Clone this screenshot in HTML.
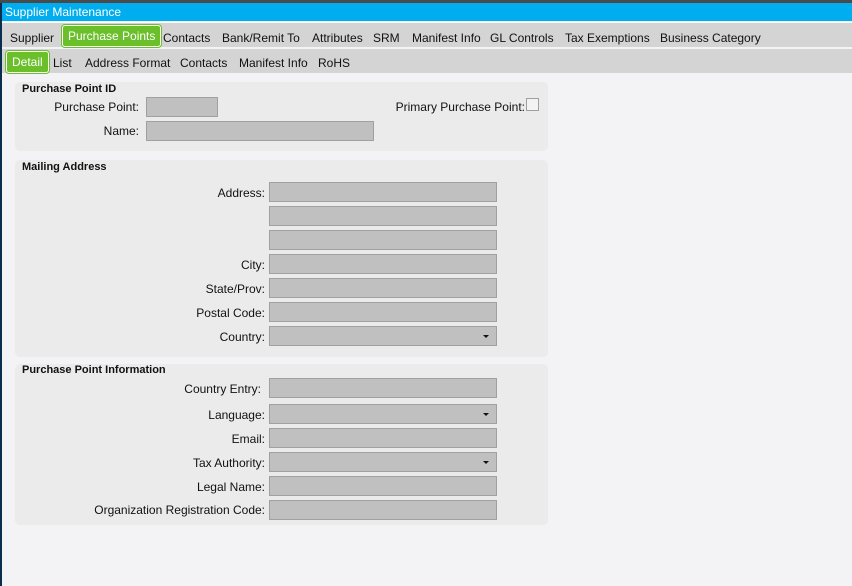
<!DOCTYPE html>
<html><head><style>
*{margin:0;padding:0;box-sizing:border-box}
body{width:852px;height:586px;background:#f3f3f5;font-family:"Liberation Sans",Arial,sans-serif;font-size:12px;color:#111;position:relative;overflow:hidden}
.a{position:absolute}
.top{left:0;top:0;width:852px;height:3px;background:#4a4a4a}
.title{left:0;top:3px;width:852px;height:18px;background:#00adef;color:#fff;padding:2px 0 0 5px;font-size:12px}
.lb{left:0;top:3px;width:2px;height:583px;background:#0b2e4e}
.tabs{left:2px;top:22px;width:850px;height:25px;background:#d4d4d4;border-top:1px solid #fff}
.sub{left:2px;top:49px;width:850px;height:24px;background:#d4d4d4}
.t{position:absolute;top:8px;white-space:nowrap}
.act{position:absolute;background:#6abf2a;color:#fff;border:1px solid #fff;border-radius:3px;box-shadow:0 0 0 1px #6abf2a;padding:3px 5px}
.p{position:absolute;left:15px;width:533px;background:#ebebeb;border-radius:5px}
.h{position:absolute;left:7px;font-weight:bold;font-size:11px}
.l{position:absolute;text-align:right;white-space:nowrap}
.i{position:absolute;height:20px;background:#c0c0c0;border:1px solid #a0a0a0}
.dd::after{content:"";position:absolute;right:7px;top:8px;border-left:3px solid transparent;border-right:3px solid transparent;border-top:3px solid #111}
</style></head><body>
<div class="a top"></div>
<div class="a title">Supplier Maintenance</div>
<div class="a lb"></div>
<div class="a tabs">
<span class="t" style="left:8px">Supplier</span>
<span class="act" style="left:60px;top:2px;height:22px">Purchase Points</span>
<span class="t" style="left:161px">Contacts</span>
<span class="t" style="left:220px">Bank/Remit To</span>
<span class="t" style="left:310px">Attributes</span>
<span class="t" style="left:371px">SRM</span>
<span class="t" style="left:410px">Manifest Info</span>
<span class="t" style="left:488px">GL Controls</span>
<span class="t" style="left:563px">Tax Exemptions</span>
<span class="t" style="left:658px">Business Category</span>
</div>
<div class="a sub">
<span class="act" style="left:4px;top:2px;height:22px">Detail</span>
<span class="t" style="left:51px;top:7px">List</span>
<span class="t" style="left:83px;top:7px">Address Format</span>
<span class="t" style="left:178px;top:7px">Contacts</span>
<span class="t" style="left:237px;top:7px">Manifest Info</span>
<span class="t" style="left:316px;top:7px">RoHS</span>
</div>

<div class="p" style="top:82px;height:69px">
<div class="h" style="top:1px">Purchase Point ID</div>
</div>
<div class="l" style="right:713px;top:100px">Purchase Point:</div>
<div class="i" style="left:146px;top:97px;width:72px"></div>
<div class="l" style="right:713px;top:124px">Name:</div>
<div class="i" style="left:146px;top:121px;width:228px"></div>
<div class="l" style="right:327px;top:100px">Primary Purchase Point:</div>
<div class="a" style="left:526px;top:98px;width:13px;height:13px;border:1px solid #a0a0a0;background:#f3f3f3"></div>

<div class="p" style="top:160px;height:197px">
<div class="h" style="top:1px">Mailing Address</div>
</div>
<div class="l" style="right:587px;top:186px">Address:</div>
<div class="i" style="left:269px;top:182px;width:228px"></div>
<div class="i" style="left:269px;top:206px;width:228px"></div>
<div class="i" style="left:269px;top:230px;width:228px"></div>
<div class="l" style="right:587px;top:258px">City:</div>
<div class="i" style="left:269px;top:254px;width:228px"></div>
<div class="l" style="right:587px;top:282px">State/Prov:</div>
<div class="i" style="left:269px;top:278px;width:228px"></div>
<div class="l" style="right:587px;top:306px">Postal Code:</div>
<div class="i" style="left:269px;top:302px;width:228px"></div>
<div class="l" style="right:587px;top:330px">Country:</div>
<div class="i dd" style="left:269px;top:326px;width:228px"></div>

<div class="p" style="top:364px;height:161px">
<div class="h" style="top:0px">Purchase Point Information</div>
</div>
<div class="l" style="right:591px;top:382px">Country Entry:</div>
<div class="i" style="left:269px;top:378px;width:228px"></div>
<div class="l" style="right:587px;top:408px">Language:</div>
<div class="i dd" style="left:269px;top:404px;width:228px"></div>
<div class="l" style="right:587px;top:432px">Email:</div>
<div class="i" style="left:269px;top:428px;width:228px"></div>
<div class="l" style="right:587px;top:456px">Tax Authority:</div>
<div class="i dd" style="left:269px;top:452px;width:228px"></div>
<div class="l" style="right:587px;top:480px">Legal Name:</div>
<div class="i" style="left:269px;top:476px;width:228px"></div>
<div class="l" style="right:587px;top:503px">Organization Registration Code:</div>
<div class="i" style="left:269px;top:500px;width:228px"></div>
</body></html>
